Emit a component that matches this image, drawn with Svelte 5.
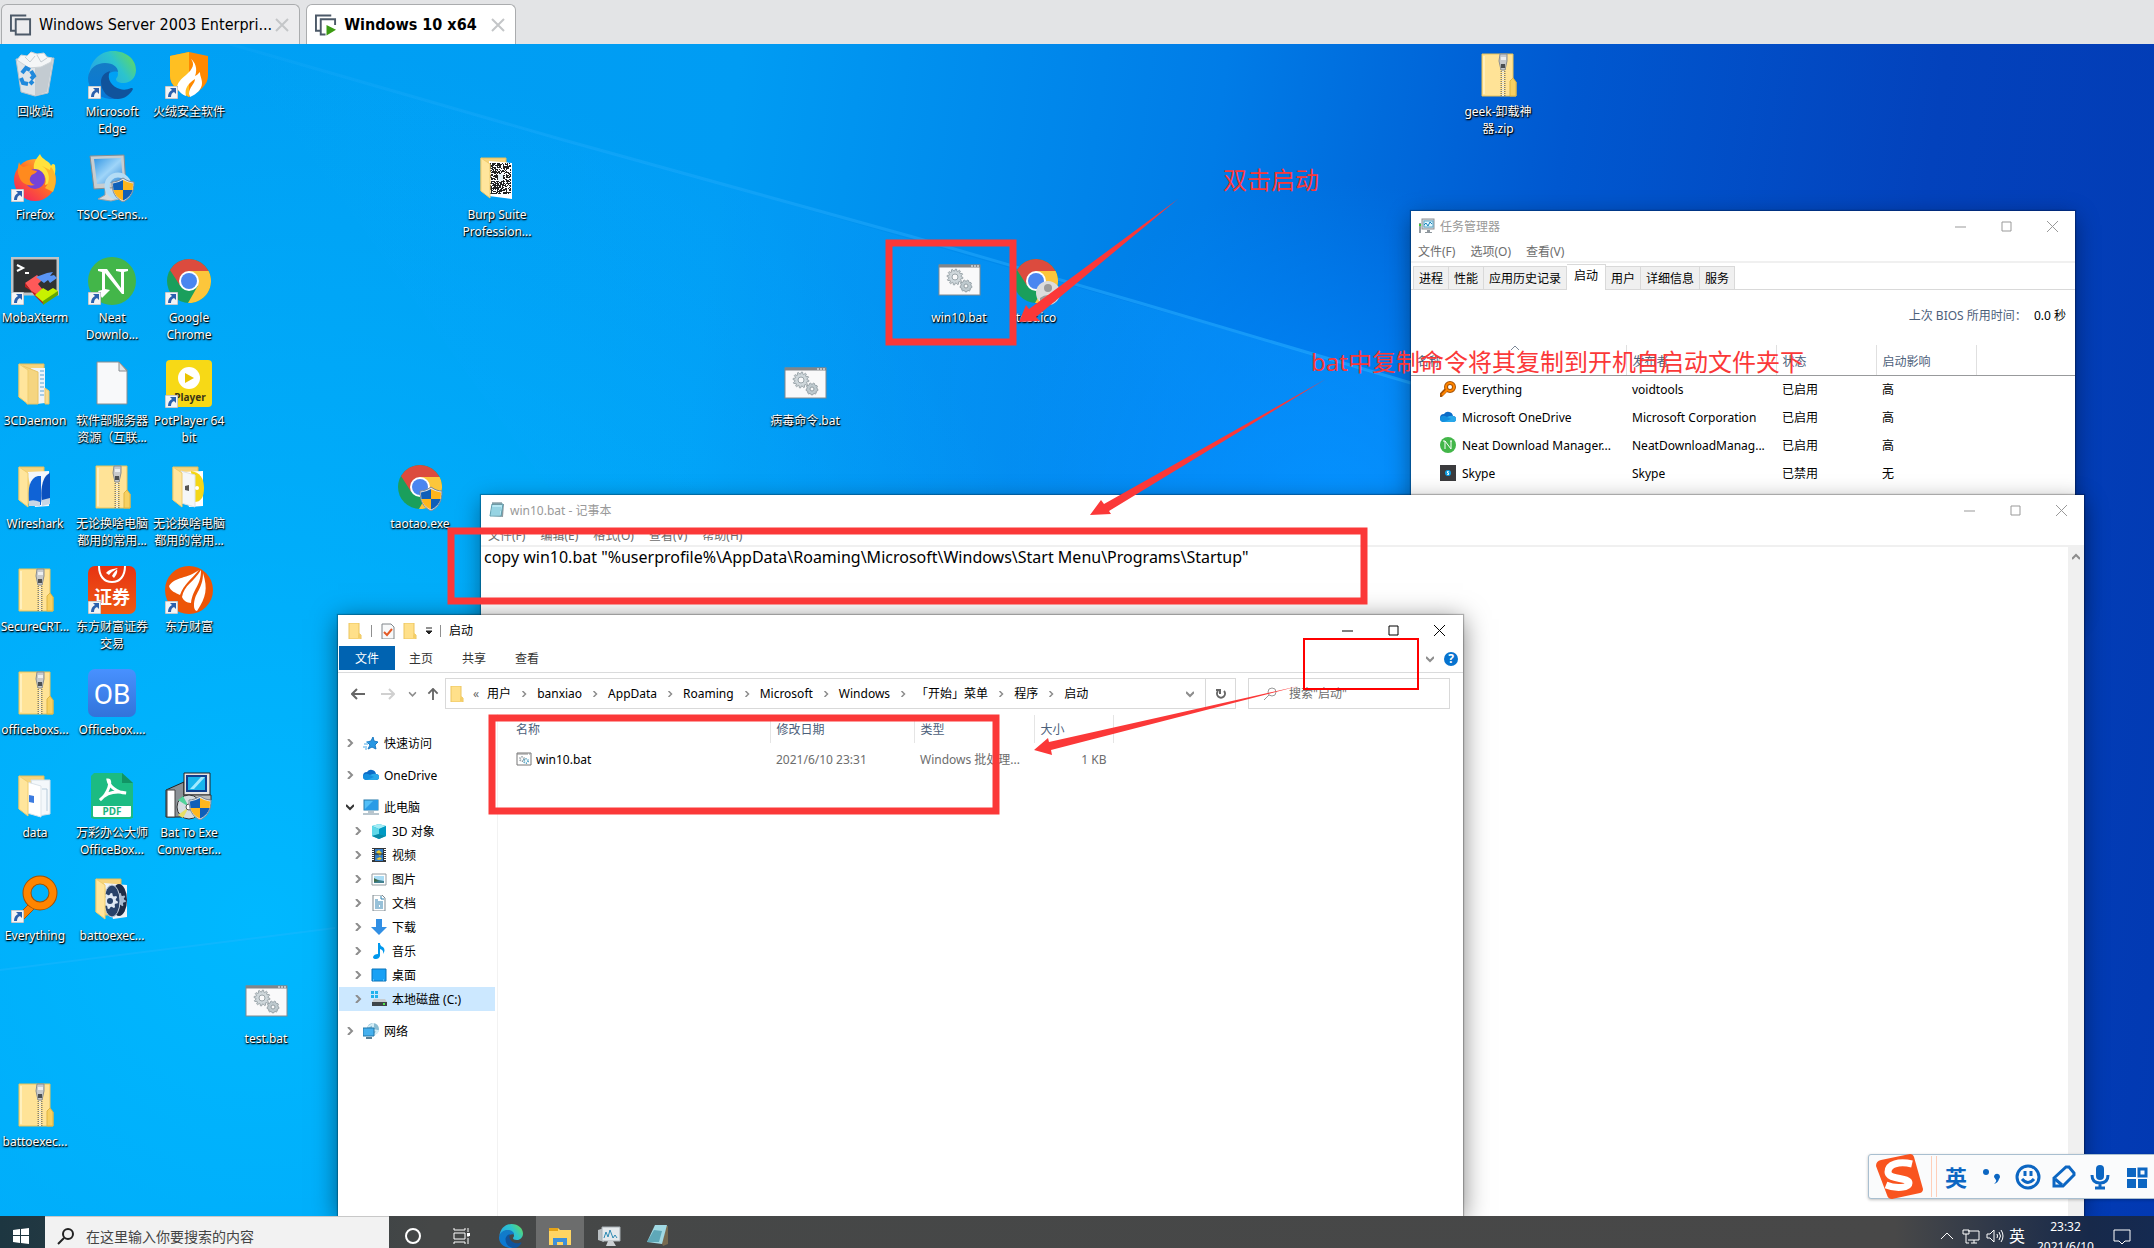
<script>
  const desktopIcons = [
    { col: 1, row: 1, icon: 'recycle', lines: ['回收站'] },
    { col: 2, row: 1, icon: 'edge', link: true, lines: ['Microsoft', 'Edge'] },
    { col: 3, row: 1, icon: 'huorong', link: true, lines: ['火绒安全软件'] },
    { col: 1, row: 2, icon: 'firefox', link: true, lines: ['Firefox'] },
    { col: 2, row: 2, icon: 'tsoc', lines: ['TSOC-Sens...'] },
    { col: 1, row: 3, icon: 'moba', link: true, lines: ['MobaXterm'] },
    { col: 2, row: 3, icon: 'neat', link: true, lines: ['Neat', 'Downlo...'] },
    { col: 3, row: 3, icon: 'chrome', link: true, lines: ['Google', 'Chrome'] },
    { col: 1, row: 4, icon: 'folder-docs', lines: ['3CDaemon'] },
    { col: 2, row: 4, icon: 'file', lines: ['软件部服务器', '资源（互联...'] },
    { col: 3, row: 4, icon: 'potplayer', link: true, lines: ['PotPlayer 64', 'bit'] },
    { col: 1, row: 5, icon: 'folder-shark', lines: ['Wireshark'] },
    { col: 2, row: 5, icon: 'zip', lines: ['无论换啥电脑', '都用的常用...'] },
    { col: 3, row: 5, icon: 'folder-yellow', lines: ['无论换啥电脑', '都用的常用...'] },
    { col: 1, row: 6, icon: 'zip', lines: ['SecureCRT...'] },
    { col: 2, row: 6, icon: 'zhengquan', link: true, lines: ['东方财富证券', '交易'] },
    { col: 3, row: 6, icon: 'dongfang', link: true, lines: ['东方财富'] },
    { col: 1, row: 7, icon: 'zip', lines: ['officeboxs...'] },
    { col: 2, row: 7, icon: 'officebox', lines: ['Officebox....'] },
    { col: 1, row: 8, icon: 'folder-data', lines: ['data'] },
    { col: 2, row: 8, icon: 'pdf', lines: ['万彩办公大师', 'OfficeBox...'] },
    { col: 3, row: 8, icon: 'installer', lines: ['Bat To Exe', 'Converter...'] },
    { col: 1, row: 9, icon: 'everything', link: true, lines: ['Everything'] },
    { col: 2, row: 9, icon: 'folder-gears', lines: ['battoexec...'] },
    { col: 4, row: 10, icon: 'bat', lines: ['test.bat'] },
    { col: 1, row: 11, icon: 'zip', lines: ['battoexec...'] },
    { col: 6, row: 5, icon: 'chrome-admin', lines: ['taotao.exe'] },
    { col: 7, row: 2, icon: 'folder-qr', lines: ['Burp Suite', 'Profession...'] },
    { col: 11, row: 4, icon: 'bat', lines: ['病毒命令.bat'] },
    { col: 13, row: 3, icon: 'bat', lines: ['win10.bat'] },
    { col: 14, row: 3, icon: 'chrome-user', lines: ['test.ico'] },
    { col: 20, row: 1, icon: 'zip', lines: ['geek-卸载神', '器.zip'] }
  ];

  const taskTabs = ['进程', '性能', '应用历史记录', '启动', '用户', '详细信息', '服务'];
  const startupApps = [
    { icon: 'everything', name: 'Everything', publisher: 'voidtools', status: '已启用', impact: '高' },
    { icon: 'onedrive', name: 'Microsoft OneDrive', publisher: 'Microsoft Corporation', status: '已启用', impact: '高' },
    { icon: 'neat', name: 'Neat Download Manager...', publisher: 'NeatDownloadManag...', status: '已启用', impact: '高' },
    { icon: 'skype', name: 'Skype', publisher: 'Skype', status: '已禁用', impact: '无' }
  ];

  const crumbs = ['用户', 'banxiao', 'AppData', 'Roaming', 'Microsoft', 'Windows', '「开始」菜单', '程序', '启动'];
  const navItems = [
    { icon: 'star', label: '快速访问' },
    { icon: 'onedrive', label: 'OneDrive' },
    { icon: 'pc', label: '此电脑', open: true },
    { icon: 'cube', label: '3D 对象', child: true },
    { icon: 'video', label: '视频', child: true },
    { icon: 'picture', label: '图片', child: true },
    { icon: 'document', label: '文档', child: true },
    { icon: 'download', label: '下载', child: true },
    { icon: 'music', label: '音乐', child: true },
    { icon: 'screen', label: '桌面', child: true },
    { icon: 'disk', label: '本地磁盘 (C:)', child: true, active: true },
    { icon: 'network', label: '网络' }
  ];

  let activeTab = $state('启动');
  let command = $state('copy win10.bat "%userprofile%\\AppData\\Roaming\\Microsoft\\Windows\\Start Menu\\Programs\\Startup"');

  function gear(cx, cy, outer, inner, teeth) {
    const points = [];
    for (let i = 0; i < teeth * 4; i++) {
      const r = i % 4 < 2 ? outer : inner;
      const a = ((i + 0.5) / (teeth * 4)) * Math.PI * 2;
      points.push(`${(cx + r * Math.cos(a)).toFixed(1)},${(cy + r * Math.sin(a)).toFixed(1)}`);
    }
    return points.join(' ');
  }

  // pseudo random dots for the QR code on the folder
  const qrCells = [];
  for (let y = 0; y < 31; y++) {
    for (let x = 0; x < 21; x++) {
      const n = Math.sin(x * 12.9898 + y * 78.233) * 43758.5453;
      if (n - Math.floor(n) < 0.6) qrCells.push([x, y]);
    }
  }
</script>

{#snippet chromeLogo()}
  <circle cx="24" cy="24" r="22" fill="#1a9f5c" />
  <path d="M24 14h19.600A22 22 0 0 1 23 46l9.700-17z" fill="#fcc63b" />
  <path d="M5 13a22 22 0 0 1 38.600 1H24l-8.700 15z" fill="#dc4b3e" />
  <circle cx="24" cy="24" r="10" fill="#fff" />
  <circle cx="24" cy="24" r="8" fill="#4a86f0" />
{/snippet}

{#snippet shield()}
  <path d="M35 24c4 3 8 4 11 4 0 10-3 16-11 20-8-4-11-10-11-20 3 0 7-1 11-4z" fill="#dfe5ea" stroke="#7c8894" />
  <path d="M35 26v10h-9.500q-.5-3-.5-6.500 5-.5 10-3.500zM35 36h9.500Q43 43 35 46.500z" fill="#0f5fb8" />
  <path d="M35 26v10h9.500q.5-3 .5-6.500-5-.5-10-3.500zM35 36h-9.500q1.500 7 9.500 10.500z" fill="#ffb61c" />
{/snippet}

{#snippet folderBack()}
  <path d="M8 4h25v36H16l-8-3z" fill="#f6d47c" stroke="#e5bd58" />
{/snippet}

{#snippet folderFront()}
  <path d="M8 4l9 6v34l-9-7z" fill="#ffe59c" stroke="#efcd6e" />
{/snippet}

{#snippet edgeLogo()}
  <path d="M1 24C2 10 12 0 25 0c14 0 23 9 23 19 0 8-6 13-12 13-6 0-8-2-8-4 0-1 2-2 2-5 0-6-6-10-12-10C10 13 3 18 1 24z" fill="url(#edgeTop)" />
  <path d="M0 27C1 17 9 12 17 12c8 0 13 4 13 9-8-2-13 4-13 11 0 9 6 15 14 16C12 50 0 40 0 27z" fill="url(#edgeLeft)" />
  <path d="M22 20c-7 2-9 7-9 11 0 9 7 17 17 17 6 0 12-4 15-10 0-1-1-1-2-1-4 2-8 2-11 1-8-2-14-10-10-18z" fill="#10539c" />
{/snippet}

{#snippet bigIcon(name)}
  <svg class="big-icon" viewBox="0 0 48 48" aria-hidden="true">
    {#if name === 'recycle'}
      <path d="M5 8l38-1-6 35-13 3-14-4z" fill="#dfe4e8" stroke="#b9c2c9" />
      <path d="M24 14l18-6-6 33-12 4z" fill="#c3cbd1" />
      <path d="M6 9l4-5 6 1 4-4 6 2 7-1 3 4 5 1-1 4-10 5-12 1z" fill="#f4f6f7" stroke="#ccd3d8" />
      <path d="M14 6l5 5 5-6M26 4l4 7 6-4" fill="none" stroke="#c5ccd1" />
      <path d="M11 22l4-5 4 2M20 20l3 5-3 3M17 33l-5-1-2-5M19 33l3-3" fill="none" stroke="#2089dc" stroke-width="4" />
    {:else if name === 'edge'}
      {@render edgeLogo()}
    {:else if name === 'huorong'}
      <path d="M24 1l19 4v20c0 9-9 16-19 21C14 41 5 34 5 25V5z" fill="#ff8800" />
      <path d="M24 1v45C14 41 5 34 5 25V5z" fill="#ffbf22" />
      <path d="M26 8c4 5 2 10-5 16-5 4-9 8-9 13 2 4 6 7 9 8-2-8 3-13 9-17 0 5-6 8-6 15l1 3c7-3 12-8 12-14 0-5-2-6-2-11-2 2-3 3-5 4 3-7 0-14-4-17z" fill="#fff" />
    {:else if name === 'firefox'}
      <circle cx="24" cy="26" r="21" fill="url(#foxBody)" />
      <path d="M29 0c-5 6-7 10-6 15 8 1 14 7 11 16 6-1 12-9 10-20-2-2-3-1-4 1-1-5-9-6-11-12z" fill="#ffe23e" />
      <path d="M31 12c8 5 9 15 3 22l8 4c4-9 3-20-2-25-1 1-1 2-1 3z" fill="#ffb52a" />
      <circle cx="24" cy="25" r="10" fill="#7543d8" />
      <path d="M8 8c1 3 2 4 5 5 4-2 7-2 9-1-2 2-2 3-1 4l5 1c-1 3-5 3-6 5-3 4 0 8 4 9-8 2-15-3-16-9-2-4-1-10 0-14z" fill="#ff8a1e" />
    {:else if name === 'tsoc'}
      <path d="M2 2l34-1 2 32-32 2z" fill="#c8cdd0" stroke="#858d92" />
      <path d="M6 5l27-1 2 24-26 2z" fill="url(#monitor)" />
      <path d="M17 34h12v7l6 3-12 3-13-2 7-4z" fill="#d5d9dc" stroke="#9aa1a5" />
      <circle cx="30" cy="32" r="11" fill="none" stroke="#b4dcf5" stroke-width="5" />
      {@render shield()}
    {:else if name === 'moba'}
      <rect x="1" y="1" width="46" height="36" fill="#2f3133" stroke="#bfc3c5" stroke-width="3" />
      <path d="M6 8l6 3-6 3M14 16h4" fill="none" stroke="#fff" stroke-width="2" />
      <path d="M14 26l12-8 5 5-4 4 5 6-8 6z" fill="#ff5959" />
      <path d="M14 26l10 13 8 8v-6L14 30z" fill="#bb1e1e" />
      <path d="M25 20l8 6 4-3 2 3 7-5-3-3-4 1 3-4-6 1z" fill="#5a95f5" />
      <path d="M24 38l8-7 5 3 5-3 5 3-15 11z" fill="#c7f100" />
      <path d="M32 48l15-10v-4L32 44z" fill="#64a800" />
    {:else if name === 'neat'}
      <circle cx="24" cy="24" r="24" fill="#43b649" />
      <path d="M10 12h9l14 19V15l-5-1v-2h12v2l-4 1v22h-2L17 16v16l5 1-8 8-4-7 4-1V15l-4-1z" fill="#fff" />
    {:else if name === 'chrome'}
      {@render chromeLogo()}
    {:else if name === 'chrome-admin'}
      {@render chromeLogo()}
      {@render shield()}
    {:else if name === 'chrome-user'}
      {@render chromeLogo()}
      <circle cx="36" cy="36" r="12" fill="#dcdcdc" />
      <circle cx="36" cy="31" r="4" fill="#9b9b9b" />
      <path d="M28 41q8-6 16 0v3q-8 5-16 0z" fill="#9b9b9b" />
    {:else if name === 'zip'}
      <path d="M8 3h31v25l3 3v14H8z" fill="#ffe397" stroke="#e9c258" />
      <path d="M36 45V30l3-3 3 4v14z" fill="#f7d061" stroke="#dfb442" />
      <path d="M10 5v38" stroke="#fff0be" stroke-width="2" />
      <path d="M29 12v33" stroke="#8c8364" stroke-width="5" stroke-dasharray="1 1" />
      <path d="M29 12v33" stroke="#f0eee6" stroke-width="2" stroke-dasharray="1 1" />
      <path d="M26 3h7v7l-2 9h-4l-2-9z" fill="#c8cacc" stroke="#8a8e91" />
      <rect x="27" y="13" width="4" height="4" fill="#4b4f52" />
      <path d="M27 6h5v3h-5z" fill="#eceeef" />
    {:else if name === 'file'}
      <path d="M9 2h22l8 8v34H9z" fill="#f8f9fa" stroke="#888e92" />
      <path d="M31 2v9h8z" fill="#e0e3e5" stroke="#888e92" />
    {:else if name === 'folder-docs'}
      {@render folderBack()}
      <path d="M20 8h14v35l-8 1z" fill="#eff4f8" />
      <path d="M29 11h4M29 15h4M29 19h4M29 23h4M29 27h4M29 31h4M29 35h4" stroke="#5ba4d4" />
      <path d="M12 6l15 6v32H16z" fill="#f5d580" stroke="#e8c365" />
      <path d="M34 28l4 3v13h-4z" fill="#f7db8d" stroke="#e8c365" />
      {@render folderFront()}
    {:else if name === 'folder-shark'}
      {@render folderBack()}
      <path d="M16 9l22-1v35l-14 1z" fill="#f3f7fb" />
      <path d="M18 41c-2-16 1-26 9-28h3v29z" fill="#0f63d6" />
      <path d="M31 40c-2-12 0-27 8-30v27z" fill="#0b50be" />
      <path d="M18 38q5-2 11 1v4H18zM31 37l8-2v6l-8 2z" fill="#c8d6e5" />
      {@render folderFront()}
    {:else if name === 'folder-yellow'}
      {@render folderBack()}
      <path d="M16 9l22-1v35l-14 1z" fill="#fff" />
      <path d="M26 8q13 2 13 17T28 39z" fill="#f4d716" />
      <path d="M16 8l14 4v32l-14-4z" fill="#f5f7f8" stroke="#dce1e4" />
      <path d="M20 23l4-1v6l-4-1z" fill="#555" />
      <circle cx="32" cy="25" r="2" fill="#fff" />
      {@render folderFront()}
    {:else if name === 'folder-data'}
      {@render folderBack()}
      <path d="M20 8h19v34l-12 2z" fill="#f4f8fb" stroke="#d2dde5" />
      <path d="M16 10l14 4v31l-14-4z" fill="#fff" stroke="#dbe3e9" />
      <path d="M18 23l5 1v7l-5-1z" fill="#3b7be0" />
      <path d="M31 17h5v22" fill="none" stroke="#b6cbdb" />
      {@render folderFront()}
    {:else if name === 'folder-gears'}
      {@render folderBack()}
      <path d="M16 8l23 2v32l-14 2z" fill="#eef2f5" />
      <ellipse cx="31" cy="25" rx="8" ry="16" fill="#1d2c46" />
      <polygon points={gear(31, 25, 7, 5, 8)} fill="#a8bbd0" />
      <ellipse cx="24" cy="26" rx="8" ry="16" fill="#29436a" stroke="#c3cfdd" />
      <polygon points={gear(22, 26, 8, 6, 8)} fill="#dfe9f3" />
      <circle cx="22" cy="26" r="3" fill="#29436a" />
      {@render folderFront()}
    {:else if name === 'folder-qr'}
      {@render folderBack()}
      <path d="M16 7l23 2v36l-23-3z" fill="#fff" />
      {#each qrCells as [x, y]}
        <rect x={17 + x} y={9 + y} width="1" height="1" fill="#222" />
      {/each}
      <rect x="25" y="20" width="5" height="7" fill="#e7f2f7" />
      {@render folderFront()}
    {:else if name === 'potplayer'}
      <rect x="1" y="0" width="46" height="47" rx="4" fill="#f7d916" />
      <circle cx="24" cy="18" r="11" fill="#fff" />
      <path d="M20 13l9 5-9 5z" fill="#eac400" />
      <text x="25" y="41" class="logo-text player">Player</text>
    {:else if name === 'zhengquan'}
      <rect width="48" height="48" rx="7" fill="url(#redTile)" />
      <path d="M11 0c0 10 5 16 13 16S37 10 37 0" fill="none" stroke="#fff" stroke-width="2" />
      <path d="M18 7c3-4 7-4 12-5-4 3-6 3-9 7zM24 10c2-4 4-5 5-7 1 4-1 6-3 9z" fill="#fff" />
      <text x="24" y="38" class="logo-text zheng">证券</text>
    {:else if name === 'dongfang'}
      <circle cx="24" cy="24" r="24" fill="#ed5507" />
      <path d="M4 20C11 10 22 13 34 4 25 15 19 18 15 29 11 27 5 25 4 20zM17 31c2-12 12-15 19-27 0 16-8 18-10 33-4 0-8-3-9-6zM29 40c0-14 9-16 9-33 5 16 3 24-6 38-2 0-3-3-3-5z" fill="#fff" />
    {:else if name === 'officebox'}
      <rect width="48" height="48" rx="7" fill="url(#blueTile)" />
      <text x="24" y="35" class="logo-text ob">OB</text>
    {:else if name === 'pdf'}
      <path d="M6 1h28l11 10v35H3V4z" fill="#1cbb82" />
      <path d="M34 1l11 10H34z" fill="#119465" />
      <path d="M4 33h40v12l-2 1H6l-2-1z" fill="#fff" stroke="#1cbb82" stroke-width="2" />
      <path d="M20 8c4 0 1 13-8 20 7-8 17-9 26-7-9 0-17-7-18-13z" fill="none" stroke="#fff" stroke-width="3" />
      <text x="24" y="43" class="logo-text pdf">PDF</text>
    {:else if name === 'installer'}
      <path d="M1 18l18-8v35H1z" fill="#8b9196" stroke="#222" />
      <path d="M2 18h8v27H2z" fill="#fff" stroke="#444" />
      <path d="M19 1h26v22H19z" fill="#e4e4e4" stroke="#222" />
      <path d="M22 4h19v15H22z" fill="#18b5ed" stroke="#103f8e" stroke-width="2" />
      <path d="M25 17l11-12h4L29 17z" fill="#a1eaff" />
      <path d="M20 23h26v5H20z" fill="#bcbcbc" stroke="#333" />
      <circle cx="24" cy="35" r="12" fill="#d5dce0" stroke="#333" />
      <path d="M24 35L13 28l5-4zM24 35l10 8-4 3z" fill="#52d39a" />
      <path d="M24 35l-6 11-5-3z" fill="#e7df65" />
      <circle cx="24" cy="35" r="3" fill="#fff" stroke="#555" />
      {@render shield()}
    {:else if name === 'everything'}
      <path d="M4 43l15-15 5 5-14 14z" fill="#f98307" stroke="#a65306" />
      <circle cx="29" cy="18" r="13" fill="none" stroke="#9f5005" stroke-width="9" />
      <circle cx="29" cy="18" r="13" fill="none" stroke="#ff8500" stroke-width="7" />
    {:else if name === 'bat'}
      <rect x="4" y="8" width="41" height="30" fill="#f9f9fa" stroke="#83888c" />
      <path d="M4 9h41" stroke="#818589" stroke-width="3" />
      <path d="M36 9h2m1 0h2m1 0h2" stroke="#fff" />
      <polygon points={gear(20, 20, 8, 6, 12)} fill="#cfd7db" stroke="#9ba5aa" />
      <circle cx="20" cy="20" r="3" fill="#f9f9fa" stroke="#9ba5aa" />
      <polygon points={gear(31, 29, 6, 5, 9)} fill="#bec9ce" stroke="#929da3" />
      <circle cx="31" cy="29" r="2" fill="#f9f9fa" stroke="#929da3" />
    {/if}
  </svg>
{/snippet}

{#snippet smallIcon(name)}
  <svg class="small-icon" viewBox="0 0 16 16" aria-hidden="true">
    {#if name === 'everything'}
      <path d="M1 14l5-5" stroke="#a65306" stroke-width="4" stroke-linecap="round" />
      <circle cx="10" cy="6" r="4" fill="none" stroke="#a65306" stroke-width="4" />
      <circle cx="10" cy="6" r="4" fill="none" stroke="#ff8500" stroke-width="2" />
      <path d="M2 14l5-5" stroke="#ff8500" stroke-width="2" />
    {:else if name === 'onedrive'}
      <path d="M4 13a4 4 0 0 1 0-8 5 5 0 0 1 9 2 3 3 0 0 1 0 6z" fill="#0c6cc7" />
      <path d="M3 13q-1-4 4-5 6-3 9 1 1 4-3 4z" fill="#28a8ea" />
      <path d="M0 10q1-4 5-3l6 3-7 3q-4 0-4-3z" fill="#1490df" />
    {:else if name === 'neat'}
      <circle cx="8" cy="8" r="8" fill="#43b649" />
      <path d="M5 12V4l6 8V4M3 4h2m5 0h2" stroke="#fff" fill="none" />
    {:else if name === 'skype'}
      <rect width="16" height="16" fill="#3b3b3d" />
      <circle cx="8" cy="8" r="3" fill="#0c9fe3" />
      <path d="M9 7q-2-1-2 0l2 2q-1 1-2 0" stroke="#fff" fill="none" />
    {:else if name === 'taskmgr'}
      <rect x="3" y="1" width="12" height="10" fill="#d9dcdf" stroke="#8b9298" />
      <rect x="5" y="3" width="9" height="6" fill="#e4f6ff" stroke="#55a6c7" />
      <path d="M5 7l2-2 2 3 2-4 2 2" fill="none" stroke="#1685bc" />
      <path d="M0 5h2v10H0z" fill="#939ca2" /><path d="M0 6h2v2H0z" fill="#43c832" />
      <path d="M8 12h3v2h2v1H6v-1h2z" fill="#8e979d" />
    {:else if name === 'notepad'}
      <path d="M4 2h11l-1 13-11-1z" fill="#8e9aa0" />
      <path d="M3 2h11l-2 12H1z" fill="#b8e8f3" stroke="#5e9eae" />
      <path d="M3 6h9M3 8h9M2 10h9M2 12h9" stroke="#76bfd2" />
      <path d="M4 0v3M6 0v3M8 0v3M10 0v3M12 0v3" stroke="#53727c" />
    {:else if name === 'folder'}
      <path d="M2 0h10v11l2 1v4H2z" fill="#ffe08a" stroke="#ecc55e" />
      <path d="M11 15v-3l1-2 2 2v3z" fill="#f4ce68" />
    {:else if name === 'check'}
      <path d="M2 1h9l3 3v12H2z" fill="#f8f9fa" stroke="#80868a" />
      <path d="M4 9l3 3 5-6" fill="none" stroke="#e45a26" stroke-width="2" />
    {:else if name === 'star'}
      <path d="M10 2l1 4 4 1-3 3 1 4-4-2-4 2 2-4-3-3 4-1z" fill="#2797e3" stroke="#1a79c2" />
      <path d="M3 7h3M1 9h4M0 12h4M2 14h2" stroke="#4ba8e5" />
    {:else if name === 'pc'}
      <rect x="1" y="1" width="14" height="10" fill="#52bff8" stroke="#2379a9" />
      <path d="M1 11L11 1h4v10z" fill="#299be6" /><path d="M5 13h6M0 15h16" stroke="#718c9d" />
    {:else if name === 'cube'}
      <path d="M1 3l7-2 7 2v10l-7 3-7-3z" fill="#1bb4d2" />
      <path d="M1 3l7-2 7 2-7 3z" fill="#a4ecf5" /><path d="M1 3l7 3v5l-7 2z" fill="#5fd8e8" />
      <path d="M8 6l7-3v10l-7-2z" fill="#009ac3" /><path d="M1 13l7-2 7 2-7 3z" fill="#0789a5" />
    {:else if name === 'video'}
      <path d="M1 1h14v14H1z" fill="#343638" /><path d="M4 2h8v12H4z" fill="#317cc8" />
      <path d="M2 2v12M14 2v12" stroke="#fff" stroke-width="2" stroke-dasharray="1 1" />
      <path d="M5 5l3-2 3 3-2 3-2-2zM5 12l4-2 2 2-3 1z" fill="#e6c737" /><path d="M4 7h8" stroke="#222" />
    {:else if name === 'picture'}
      <path d="M1 3h14v11H1z" fill="#fff" stroke="#929ba1" /><path d="M3 5h10v7H3z" fill="#a9dcf5" />
      <path d="M3 8l5 1 5 1v2H3z" fill="#418190" /><path d="M3 7l5 3-5 1z" fill="#426d4d" />
    {:else if name === 'document'}
      <path d="M2 0h9l3 3v13H2z" fill="#fff" stroke="#7d8990" /><path d="M10 1v3h3M4 5h3M4 7h8M4 9h8M4 11h4M9 11h3M4 13h8" stroke="#3182b1" fill="none" />
    {:else if name === 'download'}
      <path d="M5 0h6v8h5l-8 8-8-8h5z" fill="#318fe4" />
    {:else if name === 'music'}
      <path d="M7 0h2q0 3 3 4 3 3 0 7 1-4-3-5v7q-1 3-4 3-3 0-3-2 1-3 5-3z" fill="#0098ed" />
    {:else if name === 'screen'}
      <path d="M1 2h14v12H1z" fill="#19a1f5" stroke="#0872b9" /><path d="M2 13h12" stroke="#8ed5ff" stroke-dasharray="1 9 1 1" />
    {:else if name === 'disk'}
      <path d="M0 0h3v3H0zM4 0h3v3H4zM0 4h3v3H0zM4 4h3v3H4z" fill="#22b2ed" />
      <path d="M3 8h11l2 3H1z" fill="#c7cccf" /><path d="M1 11h15v4H1z" fill="#3e4549" /><path d="M12 13h2" stroke="#51e84a" stroke-width="2" />
    {:else if name === 'network'}
      <circle cx="10" cy="6" r="6" fill="#89bcd2" /><path d="M5 4l5-3v6l5 1-4 4" fill="none" stroke="#d4edf6" stroke-width="2" />
      <path d="M0 5h11v8H0z" fill="#45b0ee" stroke="#2377a8" /><path d="M3 15h6" stroke="#597f95" stroke-width="2" />
    {:else if name === 'bat'}
      <path d="M1 2h14v12H1z" fill="#fff" stroke="#777" /><path d="M1 3h14" stroke="#888" stroke-dasharray="11 1 1" />
      <circle cx="6" cy="8" r="2" fill="none" stroke="#8d999f" stroke-width="2" stroke-dasharray="1 1" />
      <circle cx="10" cy="10" r="2" fill="none" stroke="#58a6c5" stroke-width="2" stroke-dasharray="1 1" />
    {/if}
  </svg>
{/snippet}

{#snippet captionButtons()}
  <div class="caption-buttons">
    <button aria-label="最小化"><svg viewBox="0 0 11 11"><path d="M0 6h11" /></svg></button>
    <button aria-label="最大化"><svg viewBox="0 0 11 11"><path d="M1 1h9v9H1z" /></svg></button>
    <button aria-label="关闭"><svg viewBox="0 0 11 11"><path d="M0 0l11 11M11 0L0 11" /></svg></button>
  </div>
{/snippet}

{#snippet chevron(dir)}
  <svg class="chevron {dir}" viewBox="0 0 8 8" aria-hidden="true"><path d="M2 0l4 4-4 4" /></svg>
{/snippet}

<svg class="defs" aria-hidden="true">
  <defs>
    <linearGradient id="edgeTop" y1="0.5"><stop stop-color="#26a9e4" /><stop offset="0.5" stop-color="#2cc3ce" /><stop offset="1" stop-color="#6bdf49" /></linearGradient>
    <linearGradient id="edgeLeft" x2="0" y2="1"><stop stop-color="#147cc6" /><stop offset="1" stop-color="#0878d7" /></linearGradient>
    <linearGradient id="foxBody" x1="1" x2="0.2" y2="1"><stop stop-color="#ffd43b" /><stop offset="0.5" stop-color="#ff6f24" /><stop offset="1" stop-color="#f5245e" /></linearGradient>
    <linearGradient id="monitor" y2="1"><stop stop-color="#3397e4" /><stop offset="0.5" stop-color="#9fd5f9" /><stop offset="1" stop-color="#3186d3" /></linearGradient>
    <linearGradient id="redTile" x2="0" y2="1"><stop stop-color="#e73312" /><stop offset="1" stop-color="#ee5a15" /></linearGradient>
    <linearGradient id="blueTile" x2="0" y2="1"><stop stop-color="#4891ff" /><stop offset="1" stop-color="#3273da" /></linearGradient>
  </defs>
</svg>

<div class="viewer">
  <nav class="vm-tabs" aria-label="虚拟机">
    <div class="vm-tab">
      <svg class="vm-icon" viewBox="0 0 23 22"><path d="M17 1H1v16h4M6 5h15v16H6z" /></svg>
      <span>Windows Server 2003 Enterpri...</span>
      <button aria-label="关闭标签"><svg viewBox="0 0 14 14"><path d="M1 1l12 12M13 1L1 13" /></svg></button>
    </div>
    <div class="vm-tab current">
      <svg class="vm-icon" viewBox="0 0 23 22">
        <path d="M17 1H1v16h4M11 21H6V5h15v6" /><path class="play" d="M12 11l10 5-10 6z" />
      </svg>
      <span>Windows 10 x64</span>
      <button aria-label="关闭标签"><svg viewBox="0 0 14 14"><path d="M1 1l12 12M13 1L1 13" /></svg></button>
    </div>
  </nav>

  <main class="desktop">
    <svg class="beams" viewBox="0 0 2154 1172" preserveAspectRatio="none" aria-hidden="true">
      <defs>
        <linearGradient id="beam"><stop stop-color="#08aaff" stop-opacity="0" /><stop offset="1" stop-color="#0a96ff" stop-opacity="0.5" /></linearGradient>
        <linearGradient id="streak"><stop stop-color="#35b5ff" stop-opacity="0.1" /><stop offset="1" stop-color="#20a8ff" stop-opacity="0.7" /></linearGradient>
      </defs>
      <path d="M230 0l1181 339v120H560z" fill="url(#beam)" />
      <path d="M230 0l330 95 353 98 227 66 271 80" fill="none" stroke="url(#streak)" stroke-width="3" />
      <path d="M0 926l335-42" stroke="#30baff" stroke-opacity="0.3" stroke-width="2" />
    </svg>

    <div class="icon-grid">
      {#each desktopIcons as item}
        <button class="desk-icon" style="grid-column: {item.col}; grid-row: {item.row}">
          <span class="picture">
            {@render bigIcon(item.icon)}
            {#if item.link}
              <svg class="shortcut" viewBox="0 0 13 13"><path d="M0 0h13v13H0z" fill="#f3f4f5" stroke="#9da3a8" /><path d="M5 2h6v6L9 6q-3 1-3 5H3q0-5 4-7z" fill="#2b60ad" /></svg>
            {/if}
          </span>
          {#each item.lines as line}<span class="label">{line}</span>{/each}
        </button>
      {/each}
    </div>

    <section class="window taskmgr" aria-label="任务管理器">
      <header class="titlebar">
        {@render smallIcon('taskmgr')}
        <span>任务管理器</span>
        {@render captionButtons()}
      </header>
      <div class="menubar">
        <button>文件(F)</button><button>选项(O)</button><button>查看(V)</button>
      </div>
      <div class="task-tabs">
        {#each taskTabs as tab}
          <button class:selected={tab === activeTab} onclick={() => (activeTab = tab)}>{tab}</button>
        {/each}
      </div>
      <p class="bios">上次 BIOS 所用时间： <b>0.0 秒</b></p>
      <table class="startup">
        <thead>
          <tr>
            <th><svg class="sort" viewBox="0 0 10 6"><path d="M1 5l4-4 4 4" /></svg>名称</th>
            <th>发布者</th><th>状态</th><th>启动影响</th><th aria-label="其他"></th>
          </tr>
        </thead>
        <tbody>
          {#each startupApps as app}
            <tr>
              <td><div class="app-name">{@render smallIcon(app.icon)}{app.name}</div></td>
              <td>{app.publisher}</td><td>{app.status}</td><td>{app.impact}</td><td></td>
            </tr>
          {/each}
        </tbody>
      </table>
    </section>

    <section class="window notepad" aria-label="记事本">
      <header class="titlebar">
        {@render smallIcon('notepad')}
        <span>win10.bat - 记事本</span>
        {@render captionButtons()}
      </header>
      <div class="menubar">
        <button>文件(F)</button><button>编辑(E)</button><button>格式(O)</button><button>查看(V)</button><button>帮助(H)</button>
      </div>
      <div class="editor">
        <textarea aria-label="文本编辑器" spellcheck="false" bind:value={command}></textarea>
        <div class="scrollbar">{@render chevron('up')}</div>
      </div>
    </section>

    <section class="window explorer" aria-label="文件资源管理器">
      <header class="explorer-title">
        {@render smallIcon('folder')}
        <i class="divider"></i>
        {@render smallIcon('check')}
        {@render smallIcon('folder')}
        <svg class="quick-menu" viewBox="0 0 8 8"><path d="M1 1h6M1 4h6L4 7z" fill="#222" stroke="#222" /></svg>
        <i class="divider"></i>
        <span>启动</span>
        {@render captionButtons()}
      </header>
      <div class="ribbon">
        <button class="file-tab">文件</button><button>主页</button><button>共享</button><button>查看</button>
        <span class="ribbon-end">
          {@render chevron('down')}
          <button class="help" aria-label="帮助">?</button>
        </span>
      </div>
      <div class="address-row">
        <div class="history">
          <button aria-label="后退"><svg viewBox="0 0 14 12"><path d="M6 1L1 6l5 5M1 6h13" /></svg></button>
          <button class="faded" aria-label="前进"><svg viewBox="0 0 14 12"><path d="M8 1l5 5-5 5M13 6H0" /></svg></button>
          {@render chevron('down')}
          <button aria-label="上移"><svg viewBox="0 0 12 13"><path d="M1 6l5-5 5 5M6 1v12" /></svg></button>
        </div>
        <div class="address">
          {@render smallIcon('folder')}
          <span class="more">«</span>
          {#each crumbs as crumb, i}
            <a href="#/{crumb}">{crumb}</a>
            {#if i < crumbs.length - 1}{@render chevron('right')}{/if}
          {/each}
          <span class="address-end">{@render chevron('down')}</span>
          <button class="refresh" aria-label="刷新"><svg viewBox="0 0 12 12"><path d="M9 3a4 4 0 1 1-6 0M1 2h4v4" /></svg></button>
        </div>
        <label class="search">
          <svg viewBox="0 0 14 14"><circle cx="9" cy="5" r="4" /><path d="M6 8l-5 5" /></svg>
          <input type="text" aria-label="搜索" placeholder={'搜索"启动"'} />
        </label>
      </div>
      <div class="explorer-body">
        <nav class="tree" aria-label="文件夹">
          {#each navItems as item}
            <a href="#/{item.label}" class:child={item.child} class:active={item.active}>
              {@render chevron(item.open ? 'down open' : 'right')}
              {@render smallIcon(item.icon)}
              <span>{item.label}</span>
            </a>
          {/each}
        </nav>
        <table class="files">
          <thead><tr><th>名称</th><th>修改日期</th><th>类型</th><th>大小</th></tr></thead>
          <tbody>
            <tr>
              <td><div class="file-name">{@render smallIcon('bat')}win10.bat</div></td>
              <td>2021/6/10 23:31</td><td>Windows 批处理...</td><td class="size">1 KB</td>
            </tr>
          </tbody>
        </table>
      </div>
    </section>

    <!-- red marker drawings on top of the windows -->
    <svg class="marks" aria-hidden="true">
      <rect x="889" y="199" width="124" height="99" class="thick" />
      <rect x="451" y="487" width="913" height="70" class="thick" />
      <rect x="492" y="674" width="504" height="93" class="thick" />
      <rect x="1304" y="595" width="114" height="50" class="thin" />
      <path d="M1019 278l7-17 3 4L1178 155 1036 273l4 4z" />
      <path d="M1090 471l11-15 3 4L1326 335 1109 467l2 3z" />
      <path d="M1034 706l14-12 1 4 250-56-248 64 1 5z" />
    </svg>
    <p class="note note-start">双击启动</p>
    <p class="note note-copy">bat中复制命令将其复制到开机自启动文件夹下</p>

    <div class="ime">
      <svg class="sogou" viewBox="0 0 47 45" aria-label="搜狗输入法">
        <path d="M5 6L34 0q3 0 4 3l9 32q0 3-3 4l-28 6q-4 0-5-4L0 12q0-5 5-6z" fill="#f9541f" />
        <path d="M36 10C23 7 12 10 12 18c0 8 21 5 21 11 0 5-13 6-23 2" fill="none" stroke="#fff" stroke-width="7" />
      </svg>
      <i class="ime-divider"></i>
      <button class="ime-lang">英</button>
      <button aria-label="标点"><svg viewBox="0 0 26 26"><circle cx="7" cy="8" r="3" fill="#0c66c2" /><path d="M15 13a3 3 0 1 1 5 2q-1 4-5 5 3-3 2-4z" fill="#0c66c2" /></svg></button>
      <button aria-label="表情"><svg viewBox="0 0 26 26"><circle cx="13" cy="13" r="11" class="line" /><path d="M10 7v5M16 7v5M7 15q6 7 12 0" class="line" /></svg></button>
      <button aria-label="皮肤"><svg viewBox="0 0 26 26"><path d="M3 14L15 3h3l5 6v2L12 22H3z" class="line" /><path d="M4 15l7 6" class="line" /></svg></button>
      <button aria-label="语音"><svg viewBox="0 0 26 26"><rect x="9" y="1" width="8" height="15" rx="4" fill="#0c66c2" /><path d="M5 11q0 8 8 8t8-8M13 19v5M8 24h10" class="line" /></svg></button>
      <button aria-label="工具箱"><svg viewBox="0 0 26 26"><path d="M4 4h9v9H4zM4 15h9v9H4zM15 15h9v9h-9z" fill="#0c66c2" /><path d="M16 5h7v7h-7z" class="line" /></svg></button>
    </div>
  </main>

  <footer class="taskbar">
    <button class="start" aria-label="开始"><svg viewBox="0 0 16 16"><path d="M0 2l7-1v6H0zM8 1l8-1v7H8zM0 8h7v7l-7-1zM8 8h8v8l-8-1z" fill="#fff" /></svg></button>
    <label class="taskbar-search">
      <svg viewBox="0 0 18 18"><circle cx="11" cy="7" r="5" /><path d="M7 11l-6 6" /></svg>
      <input type="text" aria-label="搜索" placeholder="在这里输入你要搜索的内容" />
    </label>
    <button class="task" aria-label="Cortana"><svg viewBox="0 0 24 24"><circle cx="12" cy="12" r="7" fill="none" stroke="#fff" stroke-width="2" /></svg></button>
    <button class="task" aria-label="任务视图"><svg viewBox="0 0 24 24"><path d="M4 4v2h11V4M4 20v-2h11v2M4 9h11v6H4zM18 4v4M18 14v6M18 9v4" fill="none" stroke="#fff" /><path d="M17 9h3v3h-3z" fill="#fff" /></svg></button>
    <button class="task" aria-label="Microsoft Edge"><svg viewBox="0 0 48 48">{@render edgeLogo()}</svg></button>
    <button class="task running" aria-label="文件资源管理器"><svg viewBox="0 0 24 24"><path d="M1 4h9l2 2h11v15H1z" fill="#ffd563" /><path d="M1 4h9v3H1z" fill="#e6a416" /><path d="M5 21v-7h14v7h-4v-3H9v3z" fill="#3e90d8" /></svg></button>
    <button class="task" aria-label="任务管理器"><svg viewBox="0 0 24 24"><path d="M1 6l6-2v14l-6-2z" fill="#b9bfc2" /><path d="M5 3h18v14H5z" fill="#e4e9ec" stroke="#a7afb4" /><path d="M7 14l2-6 2 5 2-7 3 8 2-3 2 3" fill="none" stroke="#2d8ab3" /><path d="M11 17h5l3 5H9z" fill="#cbd0d3" /></svg></button>
    <button class="task" aria-label="记事本"><svg viewBox="0 0 24 24"><path d="M9 2h13v18l-5 2z" fill="#776a50" /><path d="M9 1h12l-5 19-15-2z" fill="#a1d9e3" /><path d="M8 6l8 1-3 11-12 0z" fill="#5fa8b8" /></svg></button>
    <div class="tray">
      <button aria-label="显示隐藏的图标"><svg viewBox="0 0 20 20"><path d="M4 13l6-6 6 6" /></svg></button>
      <button aria-label="网络"><svg viewBox="0 0 20 20"><path d="M7 5h11v9H7M10 17h6M13 14v3M2 4h6v4H2zM5 8v9h3" /></svg></button>
      <button aria-label="音量"><svg viewBox="0 0 20 20"><path d="M2 8h3l4-4v12l-4-4H2zM12 8q1 2 0 4M14 6q3 4 0 8M16 4q4 6 0 12" /></svg></button>
      <button class="lang">英</button>
      <time><span>23:32</span><span>2021/6/10</span></time>
      <button class="action" aria-label="操作中心"><svg viewBox="0 0 20 20"><path d="M2 4h16v11h-5l-3 3-3-3H2z" /></svg></button>
    </div>
  </footer>
</div>

<style>
  :global(body) {
    margin: 0;
    font: 12px/17px 'Noto Sans', 'Noto Sans CJK SC', sans-serif;
  }

  button,
  input,
  textarea {
    font: inherit;
    color: inherit;
    border: 0;
    padding: 0;
    background: none;
  }

  a {
    color: inherit;
    text-decoration: none;
  }

  p {
    margin: 0;
  }

  svg {
    display: block;
    flex-shrink: 0;
  }

  .defs {
    position: absolute;
    width: 0;
    height: 0;
  }

  .viewer {
    display: flex;
    flex-direction: column;
    height: 100vh;
    overflow: hidden;
  }

  /* Virtual machine tabs */
  .vm-tabs {
    display: flex;
    gap: 6px;
    height: 44px;
    box-sizing: border-box;
    padding: 4px 1px 0;
    background: #e3e4e6;
    font-family: 'DejaVu Sans Condensed', 'DejaVu Sans', sans-serif;
    font-size: 16px;
    line-height: 22px;
  }

  .vm-tab {
    display: flex;
    align-items: center;
    gap: 7px;
    padding: 0 10px 0 8px;
    border: 1px solid #aaacae;
    border-bottom: 0;
    border-radius: 6px 6px 0 0;
    background: #ececee;
    white-space: nowrap;
  }

  .vm-tab.current {
    background: #fff;
    font-weight: bold;
  }

  .vm-icon {
    width: 22px;
    height: 22px;
    fill: none;
    stroke: #4c5968;
    stroke-width: 2;
  }

  .vm-icon .play {
    fill: #3c9b12;
    stroke: none;
  }

  .vm-tab button {
    margin-left: -4px;
  }

  .vm-tab button svg {
    width: 14px;
    fill: none;
    stroke: #c4c6c8;
    stroke-width: 2;
  }

  .vm-tab.current button {
    margin-left: 7px;
  }

  /* Desktop */
  .desktop {
    position: relative;
    flex: 1;
    min-height: 0;
    overflow: hidden;
    background:
      radial-gradient(circle at 62% 40%, #008cff 0, transparent 22%),
      radial-gradient(circle at 12% 75%, #00b8ff 0, transparent 42%),
      linear-gradient(98deg, #00a2f5 0, #009cf3 32%, #007ce7 53%, #0058d0 68%, #0342bc 84%, #0239b2 100%);
  }

  .beams,
  .marks {
    position: absolute;
    inset: 0;
    width: 100%;
    height: 100%;
  }

  .icon-grid {
    position: absolute;
    inset: 7px auto auto -3px;
    display: grid;
    grid-template-columns: repeat(20, 76px);
    grid-template-rows: repeat(11, 103px);
    column-gap: 1px;
  }

  .desk-icon {
    display: flex;
    flex-direction: column;
    align-items: center;
    color: #fff;
    text-shadow: 0 1px 2px #000, 1px 1px 1px #000;
  }

  .picture {
    position: relative;
    margin-bottom: 4px;
  }

  .big-icon {
    width: 48px;
    height: 48px;
    text-shadow: none;
  }

  .shortcut {
    position: absolute;
    left: 0;
    bottom: 0;
    width: 13px;
    height: 13px;
  }

  .label {
    white-space: nowrap;
  }

  .logo-text {
    text-anchor: middle;
    fill: #fff;
    font-family: 'Noto Sans', 'Noto Sans CJK SC', sans-serif;
    font-weight: bold;
  }

  .player {
    fill: #3a3416;
    font-size: 10px;
  }

  .zheng {
    font-size: 18px;
  }

  .ob {
    font-size: 28px;
    font-weight: normal;
    font-family: Roboto, sans-serif;
  }

  .pdf {
    fill: #1cb37e;
    font-size: 10px;
  }

  /* Windows */
  .window {
    position: absolute;
    display: flex;
    flex-direction: column;
    background: #fff;
    box-shadow: 0 0 1px 1px #00000040, 0 6px 22px #00000066;
  }

  .titlebar {
    display: flex;
    align-items: center;
    gap: 5px;
    height: 30px;
    padding-left: 8px;
    color: #999;
  }

  .small-icon {
    width: 16px;
    height: 16px;
  }

  .caption-buttons {
    display: flex;
    margin-left: auto;
  }

  .caption-buttons button {
    display: grid;
    place-items: center;
    width: 46px;
    height: 30px;
  }

  .caption-buttons svg {
    width: 11px;
    height: 11px;
    fill: none;
    stroke: currentColor;
  }

  .menubar {
    display: flex;
    gap: 15px;
    height: 20px;
    padding-left: 7px;
    border-bottom: 2px solid #f0f0f0;
    color: #6d6d6d;
  }

  .taskmgr {
    left: 1411px;
    top: 167px;
    width: 664px;
    height: 400px;
  }

  .task-tabs {
    display: flex;
    align-items: flex-end;
    height: 25px;
    margin-top: 1px;
    padding-left: 2px;
    border-bottom: 1px solid #d9d9d9;
  }

  .task-tabs button {
    height: 23px;
    padding: 0 5px;
    border: 1px solid #d9d9d9;
    border-bottom: 0;
    background: #f0f0f0;
  }

  .task-tabs button + button {
    border-left: 0;
  }

  .task-tabs .selected {
    height: 26px;
    margin-bottom: -1px;
    padding: 0 7px 4px;
    background: #fff;
  }

  .bios {
    padding: 17px 9px 0 0;
    color: #4c607a;
    text-align: right;
  }

  .bios b {
    margin-left: 4px;
    color: #000;
    font-weight: normal;
  }

  table {
    border-collapse: collapse;
    table-layout: fixed;
  }

  th {
    color: #4c607a;
    font-weight: normal;
    text-align: left;
  }

  th,
  td {
    box-sizing: border-box;
    padding: 0 0 0 6px;
    white-space: nowrap;
  }

  .startup {
    width: 100%;
    margin-top: 21px;
  }

  .startup th {
    position: relative;
    width: 100px;
    height: 30px;
    padding-top: 4px;
    border-right: 1px solid #e0e0e0;
    border-bottom: 1px solid #989a9c;
  }

  .startup th:first-child {
    width: 215px;
  }

  .startup th:nth-child(2) {
    width: 150px;
  }

  .startup th:last-child {
    width: auto;
    border-right: 0;
  }

  .sort {
    position: absolute;
    left: 99px;
    top: 0;
    width: 10px;
    fill: none;
    stroke: #7b8797;
  }

  .startup td {
    height: 28px;
  }

  .app-name,
  .file-name {
    display: flex;
    align-items: center;
    gap: 6px;
  }

  .app-name {
    padding-left: 23px;
  }

  .notepad {
    left: 481px;
    top: 451px;
    bottom: 0;
    width: 1603px;
  }

  .notepad .menubar {
    align-items: center;
  }

  .editor {
    display: flex;
    flex: 1;
  }

  textarea {
    flex: 1;
    padding: 0 3px;
    border: 0;
    outline: 0;
    resize: none;
    background: #fff;
    font-size: 16px;
    line-height: 21px;
  }

  .scrollbar {
    width: 16px;
    padding-top: 6px;
    background: #f0f0f0;
  }

  .scrollbar .chevron {
    margin: 0 auto;
  }

  .chevron {
    width: 8px;
    height: 8px;
    fill: none;
    stroke: #8d8d8d;
    stroke-width: 2;
  }

  .up {
    transform: rotate(-90deg);
  }

  .down {
    transform: rotate(90deg);
  }

  .open {
    stroke: #333;
  }

  /* File explorer */
  .explorer {
    left: 338px;
    top: 571px;
    bottom: 0;
    width: 1125px;
    box-shadow: 0 0 1px 1px #00000040, 0 4px 24px #00000080;
  }

  .explorer-title {
    display: flex;
    align-items: center;
    gap: 8px;
    height: 31px;
    padding: 0 1px 0 9px;
  }

  .explorer-title > :global(.small-icon + .small-icon) {
    margin-left: -2px;
  }

  .divider {
    width: 1px;
    height: 12px;
    background: #8f8f8f;
  }

  .quick-menu {
    width: 8px;
    margin: 0 -1px;
  }

  .ribbon {
    display: flex;
    height: 26px;
    padding-left: 1px;
    border-bottom: 1px solid #dadbdc;
    color: #333;
  }

  .ribbon > button {
    height: 24px;
    padding: 0 14px;
    margin-right: 1px;
  }

  .ribbon .file-tab {
    margin-right: 0;
    padding: 0 16px;
    background: #0063b1;
    color: #fff;
  }

  .ribbon-end {
    display: flex;
    align-items: center;
    gap: 10px;
    margin-left: auto;
    padding-right: 5px;
  }

  .help {
    width: 14px;
    height: 14px;
    border-radius: 50%;
    background: #0673cf;
    color: #fff;
    font-weight: bold;
    line-height: 14px;
  }

  .address-row {
    display: flex;
    gap: 12px;
    padding: 5px 13px 5px 13px;
  }

  .history {
    display: flex;
    align-items: center;
    gap: 16px;
    width: 82px;
  }

  .history button svg {
    width: 14px;
    height: 12px;
    fill: none;
    stroke: #666;
    stroke-width: 2;
  }

  .history .faded svg {
    stroke: #d0d0d0;
  }

  .history .chevron {
    width: 7px;
    margin: 0 -6px 0 -2px;
  }

  .address {
    display: flex;
    flex: 1;
    align-items: center;
    gap: 10px;
    height: 29px;
    padding-left: 3px;
    border: 1px solid #d9d9d9;
  }

  .address > .chevron {
    width: 6px;
    height: 6px;
  }

  .address .more {
    margin: 0 -2px;
    color: #666;
  }

  .address-end {
    margin: 0 1px 0 auto;
  }

  .refresh {
    display: grid;
    place-items: center;
    width: 30px;
    height: 29px;
    border-left: 1px solid #d9d9d9;
  }

  .refresh svg {
    width: 12px;
    fill: none;
    stroke: #666;
    stroke-width: 2;
  }

  .search {
    display: flex;
    align-items: center;
    gap: 12px;
    width: 186px;
    padding-left: 14px;
    border: 1px solid #d9d9d9;
  }

  .search svg {
    width: 14px;
    fill: none;
    stroke: #999;
  }

  .search input {
    width: 120px;
  }

  input::placeholder {
    color: #6d6d6d;
    opacity: 1;
  }

  .explorer-body {
    display: flex;
    flex: 1;
    align-items: flex-start;
    min-height: 0;
  }

  .tree {
    align-self: stretch;
    width: 156px;
    margin-right: 12px;
    padding: 9px 2px 0 1px;
    border-right: 1px solid #f2f2f2;
  }

  .tree a {
    display: flex;
    align-items: center;
    gap: 5px;
    height: 24px;
    padding-left: 7px;
  }

  .tree a:not(.child) {
    margin-top: 8px;
  }

  .tree a.child {
    padding-left: 15px;
  }

  .tree a.active {
    background: #cce8ff;
  }

  .tree .chevron {
    margin-right: 4px;
  }

  .files {
    width: 604px;
    margin-top: 1px;
  }

  .files th {
    height: 28px;
    border-right: 1px solid #e5e5e5;
  }

  .files th:first-child {
    width: 260px;
  }

  .files th:nth-child(2) {
    width: 144px;
  }

  .files th:nth-child(3) {
    width: 120px;
  }

  .files td {
    height: 32px;
    color: #6d6d6d;
  }

  .files td:first-child {
    color: #000;
  }

  .file-name {
    gap: 4px;
  }

  .files .size {
    padding-right: 7px;
    text-align: right;
  }

  /* Marker drawings */
  .marks {
    pointer-events: none;
    fill: #fb3838;
  }

  .thick {
    fill: none;
    stroke: #fb3838;
    stroke-width: 7;
  }

  .thin {
    fill: none;
    stroke: #f00;
    stroke-width: 2;
  }

  .note {
    position: absolute;
    color: #fb3838;
    font-size: 24px;
    line-height: 32px;
    white-space: nowrap;
  }

  .note-start {
    left: 1223px;
    top: 120px;
  }

  .note-copy {
    left: 1311px;
    top: 302px;
  }

  /* Input method bar */
  .ime {
    position: absolute;
    right: -6px;
    bottom: 17px;
    display: flex;
    align-items: center;
    gap: 10px;
    height: 43px;
    padding: 0 10px 0 7px;
    border: 1px solid #a9bfd0;
    border-radius: 3px;
    background: #fafbfc;
    box-shadow: 0 1px 3px #00000040;
  }

  .ime button {
    width: 26px;
    height: 26px;
  }

  .sogou {
    width: 47px;
  }

  .ime-divider {
    width: 4px;
    height: 41px;
    margin-left: -2px;
    border: 1px solid #ffcfb9;
    border-width: 0 1px;
  }

  .ime .ime-lang {
    margin-left: -4px;
    color: #0c66c2;
    font-size: 22px;
    font-weight: bold;
    line-height: 26px;
  }

  .line {
    fill: none;
    stroke: #0c66c2;
    stroke-width: 3;
  }

  /* Taskbar, its lower edge runs out of the view */
  .taskbar {
    display: flex;
    height: 40px;
    margin-bottom: -8px;
    background: linear-gradient(90deg, #1d3641 0, #454747 20%, #484848 88%, #17294a 97%, #152a51 100%);
    color: #fff;
  }

  .start {
    display: grid;
    place-items: center;
    width: 45px;
    padding-right: 3px;
  }

  .start svg {
    width: 16px;
  }

  .taskbar-search {
    display: flex;
    align-items: center;
    gap: 11px;
    width: 332px;
    padding-left: 12px;
    background: #f2f2f2;
    box-shadow: inset 0 1px #c8c8c8;
    font-size: 14px;
  }

  .taskbar-search svg {
    width: 18px;
    fill: none;
    stroke: #222;
    stroke-width: 2;
  }

  .taskbar-search input {
    flex: 1;
  }

  .taskbar-search input::placeholder {
    color: #444;
  }

  .task {
    display: grid;
    place-items: center;
    width: 48px;
    height: 40px;
    margin-right: 1px;
  }

  .task svg {
    width: 24px;
  }

  .running {
    background: #6c6d6d;
  }

  .tray {
    display: flex;
    align-items: center;
    gap: 4px;
    margin-left: auto;
    padding-right: 22px;
  }

  .tray svg {
    width: 20px;
    fill: none;
    stroke: #fff;
  }

  .lang {
    font-size: 16px;
  }

  .tray time {
    display: flex;
    flex-direction: column;
    gap: 3px;
    width: 73px;
    text-align: center;
  }

  .action {
    margin-left: 6px;
  }
</style>
